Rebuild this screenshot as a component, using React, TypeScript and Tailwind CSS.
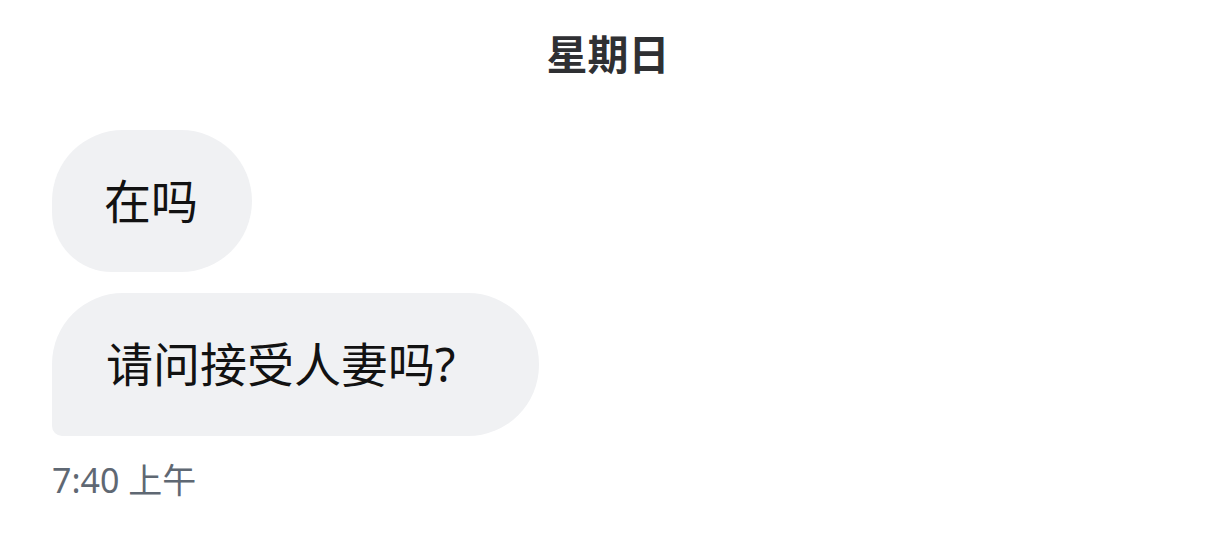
export default function App() {
  return (
    <div
      className="w-[1216px] h-[558px] bg-white overflow-hidden"
      style={{ fontFamily: '"Noto Sans", "Noto Sans CJK SC", sans-serif' }}
    >
      {/* Day header */}
      <div className="h-[130px] pt-[28px] flex justify-center">
        <span className="text-[41px] leading-[52px] font-bold text-[#2f3033]">星期日</span>
      </div>

      {/* Messages */}
      <div className="pl-[52px] flex flex-col items-start gap-[21px]">
        <div className="h-[142px] flex items-center pl-[52px] pr-[54px] bg-[#f0f1f3] rounded-[71px] rounded-bl-[60px] text-[47px] text-[#121212]">
          在吗
        </div>
        <div className="h-[143px] flex items-center pl-[54px] pr-[84px] bg-[#f0f1f3] rounded-[71px] rounded-bl-[10px] text-[47px] text-[#121212]">
          请问接受人妻吗?
        </div>
      </div>

      <div className="pl-[52px] mt-[22px] text-[34px] leading-[44px] text-[#5f6873]">7:40 上午</div>
    </div>
  );
}
